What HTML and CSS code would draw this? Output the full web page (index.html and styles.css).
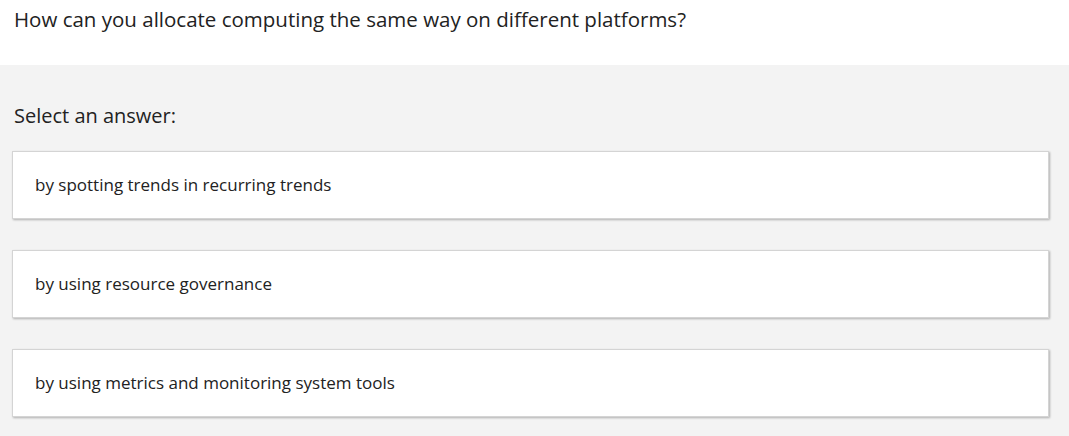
FILE: index.html
```html
<!DOCTYPE html>
<html lang="en">
<head>
<meta charset="utf-8">
<link rel="stylesheet" href="styles.css">
</head>
<body>
<div class="question">How can you allocate computing the same way on different platforms?</div>
<div class="answers">
  <div class="prompt">Select an answer:</div>
  <div class="option">by spotting trends in recurring trends</div>
  <div class="option">by using resource governance</div>
  <div class="option">by using metrics and monitoring system tools</div>
</div>
</body>
</html>
```
FILE: styles.css
```css
html, body {
  margin: 0;
  padding: 0;
  background: #f3f3f3;
  font-family: "Open Sans", "Noto Sans", sans-serif;
  color: #222;
}
.question {
  background: #fff;
  height: 65px;
  box-sizing: border-box;
  padding: 4px 14px 0;
  font-size: 20.5px;
  line-height: 30px;
}
.answers {
  padding: 36px 20px 20px 12px;
  display: flex;
  flex-direction: column;
  gap: 31px;
}
.prompt {
  padding-left: 2px;
  font-size: 20px;
  line-height: 30px;
  margin-bottom: -11px;
}
.option {
  background: #fff;
  border: 1px solid #d4d4d4;
  box-shadow: 1px 1px 2px rgba(0,0,0,0.28);
  height: 68px;
  box-sizing: border-box;
  display: flex;
  align-items: center;
  padding: 0 22px 1px;
  font-size: 17px;
}
```
